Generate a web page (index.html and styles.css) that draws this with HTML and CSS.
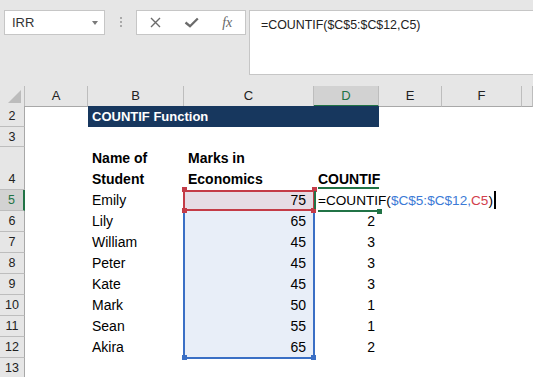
FILE: index.html
```html
<!DOCTYPE html>
<html lang="en">
<head>
    <meta charset="UTF-8">
    <title>COUNTIF Function</title>
    <link rel="stylesheet" href="styles.css">
</head>
<body>

    <div class="bar">
        <div class="namebox"><span>IRR</span><span class="caret"></span></div>
        <div class="grip"><i></i><i></i><i></i></div>
        <div class="fxbox">
            <span class="tool">
                <svg width="11" height="11" viewBox="0 0 11 11"><path d="M1 1L10 10M10 1L1 10" stroke="#6b6b6b" stroke-width="1.4" fill="none"/></svg>
            </span>
            <span class="tool">
                <svg width="15" height="11" viewBox="0 0 15 11"><path d="M1.5 5.5L6 9.2L13.8 1.5" stroke="#6b6b6b" stroke-width="2.3" fill="none"/></svg>
            </span>
            <span class="tool fx">fx</span>
        </div>
        <div class="formula">=COUNTIF($C$5:$C$12,C5)</div>
    </div>

    <div class="sheet">
        <div class="row head">
            <div class="corner"><svg width="13" height="13" viewBox="0 0 13 13"><polygon points="0,13 13,0 13,13" fill="#bcbcbc"/></svg></div>
            <div class="ch">A</div>
            <div class="ch">B</div>
            <div class="ch">C</div>
            <div class="ch active">D</div>
            <div class="ch">E</div>
            <div class="ch">F</div>
            <div class="ch"></div>
        </div>

        <div class="row">
            <div class="rh">2</div>
            <div></div>
            <div class="title">COUNTIF Function</div>
            <div></div><div></div><div></div>
        </div>

        <div class="row short">
            <div class="rh">3</div>
            <div></div><div></div><div></div><div></div><div></div><div></div><div></div>
        </div>

        <div class="row tall">
            <div class="rh">4</div>
            <div></div>
            <div class="cell bold">Name of<br>Student</div>
            <div class="cell bold">Marks in<br>Economics</div>
            <div class="cell bold">COUNTIF</div>
            <div></div><div></div><div></div>
        </div>

        <div class="row">
            <div class="rh active">5</div>
            <div></div>
            <div class="cell">Emily</div>
            <div class="cell num ref-red">75</div>
            <div class="cell edit">=COUNTIF(<span class="blue">$C$5:$C$12,</span><span class="red">C5</span>)</div>
            <div></div><div></div><div></div>
        </div>

        <div class="row">
            <div class="rh">6</div><div></div>
            <div class="cell">Lily</div>
            <div class="cell num ref-blue">65</div>
            <div class="cell val">2</div>
            <div></div><div></div><div></div>
        </div>
        <div class="row">
            <div class="rh">7</div><div></div>
            <div class="cell">William</div>
            <div class="cell num ref-blue">45</div>
            <div class="cell val">3</div>
            <div></div><div></div><div></div>
        </div>
        <div class="row">
            <div class="rh">8</div><div></div>
            <div class="cell">Peter</div>
            <div class="cell num ref-blue">45</div>
            <div class="cell val">3</div>
            <div></div><div></div><div></div>
        </div>
        <div class="row">
            <div class="rh">9</div><div></div>
            <div class="cell">Kate</div>
            <div class="cell num ref-blue">45</div>
            <div class="cell val">3</div>
            <div></div><div></div><div></div>
        </div>
        <div class="row">
            <div class="rh">10</div><div></div>
            <div class="cell">Mark</div>
            <div class="cell num ref-blue">50</div>
            <div class="cell val">1</div>
            <div></div><div></div><div></div>
        </div>
        <div class="row">
            <div class="rh">11</div><div></div>
            <div class="cell">Sean</div>
            <div class="cell num ref-blue">55</div>
            <div class="cell val">1</div>
            <div></div><div></div><div></div>
        </div>
        <div class="row">
            <div class="rh">12</div><div></div>
            <div class="cell">Akira</div>
            <div class="cell num ref-blue">65</div>
            <div class="cell val">2</div>
            <div></div><div></div><div></div>
        </div>
        <div class="row">
            <div class="rh">13</div>
            <div></div><div></div><div></div><div></div><div></div><div></div><div></div>
        </div>

        <!-- range highlight and active cell marks -->
        <div class="range blue-range"></div>
        <div class="range red-range"></div>
        <div class="handle red-h" style="left: 182px; top: 101px;"></div>
        <div class="handle red-h" style="left: 312px; top: 101px;"></div>
        <div class="handle red-h" style="left: 182px; top: 122px;"></div>
        <div class="handle red-h" style="left: 311px; top: 122px;"></div>
        <div class="handle blue-h" style="left: 182px; top: 269px;"></div>
        <div class="handle blue-h" style="left: 311px; top: 269px;"></div>
        <div class="green-left"></div>
        <div class="green-line" style="top: 101px;"></div>
        <div class="green-line" style="top: 124px;"></div>
        <div class="handle green-h"></div>
        <div class="caret-bar"></div>
    </div>

</body>
</html>
```

FILE: styles.css
```css
body {
    margin: 0;
    background-color: #ffffff;
    font-family: "Liberation Sans", Arial, sans-serif;
    overflow: hidden;
}
.bar {
    display: flex;
    align-items: flex-start;
    height: 86px;
    padding: 10px 0 0 4px;
    box-sizing: border-box;
    background-color: #e6e6e6;
}
.namebox {
    display: flex;
    align-items: center;
    justify-content: space-between;
    width: 101px;
    height: 25px;
    padding: 0 6px 0 7px;
    box-sizing: border-box;
    background-color: white;
    border: 1px solid #c6c6c6;
    font-size: 13px;
    color: #333;
}
.caret {
    width: 0;
    height: 0;
    border-left: 3px solid transparent;
    border-right: 3px solid transparent;
    border-top: 4px solid #7a7a7a;
}
.grip {
    display: flex;
    flex-direction: column;
    align-items: center;
    gap: 2px;
    width: 31px;
    padding-top: 7px;
}
.grip i {
    width: 2px;
    height: 2px;
    background-color: #a9a9a9;
}
.fxbox {
    display: flex;
    align-items: center;
    width: 110px;
    height: 25px;
    padding-left: 1px;
    box-sizing: border-box;
    background-color: white;
    border: 1px solid #c6c6c6;
}
.tool {
    display: flex;
    justify-content: center;
    align-items: center;
    width: 36px;
}
.fx {
    font-family: "Liberation Serif", serif;
    font-style: italic;
    font-size: 14px;
    color: #666;
}
.formula {
    flex: 1;
    height: 65px;
    margin-left: 3px;
    padding: 7px 11px;
    box-sizing: border-box;
    background-color: white;
    border: 1px solid #c6c6c6;
    border-right: none;
    font-size: 12.4px;
    color: #222;
}
.sheet {
    position: relative;
}
.row {
    display: grid;
    grid-template-columns: 25px 63px 96px 130px 65px 63px 80px 11px;
    height: 21px;
}
.row.short {
    height: 20px;
}
.row.tall {
    height: 43px;
}
.row.head {
    height: 20px;
}
.corner {
    display: flex;
    justify-content: flex-end;
    align-items: flex-end;
    padding: 0 3px 3px 0;
    background-color: #e6e6e6;
    border-right: 1px solid #bdbdbd;
    border-bottom: 1px solid #a8a8a8;
}
.ch {
    background-color: #e6e6e6;
    border-right: 1px solid #bdbdbd;
    border-bottom: 1px solid #a8a8a8;
    text-align: center;
    font-size: 13px;
    line-height: 20px;
    color: #222;
}
.ch.active {
    background-color: #d2d2d2;
    border-bottom: 2px solid #217346;
    color: #217346;
    line-height: 19px;
}
.rh {
    background-color: #e6e6e6;
    border-right: 1px solid #a8a8a8;
    border-bottom: 1px solid #bdbdbd;
    text-align: center;
    font-size: 12.5px;
    color: #222;
    display: flex;
    align-items: center;
    justify-content: center;
}
.row.tall .rh {
    align-items: flex-end;
    padding-bottom: 3px;
}
.rh.active {
    background-color: #d2d2d2;
    border-right: 2px solid #217346;
    color: #217346;
}
.title {
    grid-column: span 3;
    background-color: #17375e;
    color: white;
    font-weight: bold;
    font-size: 13px;
    line-height: 21px;
    padding-left: 4px;
    white-space: nowrap;
}
.cell {
    display: flex;
    flex-direction: column;
    justify-content: flex-end;
    padding-left: 4px;
    font-size: 14px;
    line-height: 21px;
    color: #000;
    white-space: nowrap;
}
.bold {
    font-weight: bold;
}
.num {
    align-items: flex-end;
    padding-right: 8px;
}
.val {
    align-items: flex-end;
    padding-right: 4px;
}
.edit {
    display: block;
    padding-left: 4px;
    font-size: 13.6px;
    overflow: visible;
}
.edit .blue {
    color: #3c7ad6;
}
.edit .red {
    color: #d2404c;
}
.ref-red {
    background-color: #e6dce5;
}
.ref-blue {
    background-color: #e8eef8;
}
.range {
    position: absolute;
    left: 183px;
    width: 132px;
    box-sizing: border-box;
}
.red-range {
    top: 104px;
    height: 21px;
    border: 2px solid #c43b47;
}
.blue-range {
    top: 125px;
    height: 148px;
    border: 2px solid #3a6fc5;
    border-top: none;
}
.handle {
    position: absolute;
    width: 5px;
    height: 5px;
}
.red-h {
    background-color: #c43b47;
}
.blue-h {
    background-color: #3a6fc5;
}
.green-h {
    left: 377px;
    top: 123px;
    background-color: #217346;
}
.green-left {
    position: absolute;
    left: 314px;
    top: 105px;
    width: 2px;
    height: 18px;
    background-color: #217346;
}
.green-line {
    position: absolute;
    left: 318px;
    width: 61px;
    height: 2px;
    background-color: #217346;
}
.caret-bar {
    position: absolute;
    left: 494px;
    top: 105px;
    width: 2px;
    height: 18px;
    background-color: #000;
}
```
